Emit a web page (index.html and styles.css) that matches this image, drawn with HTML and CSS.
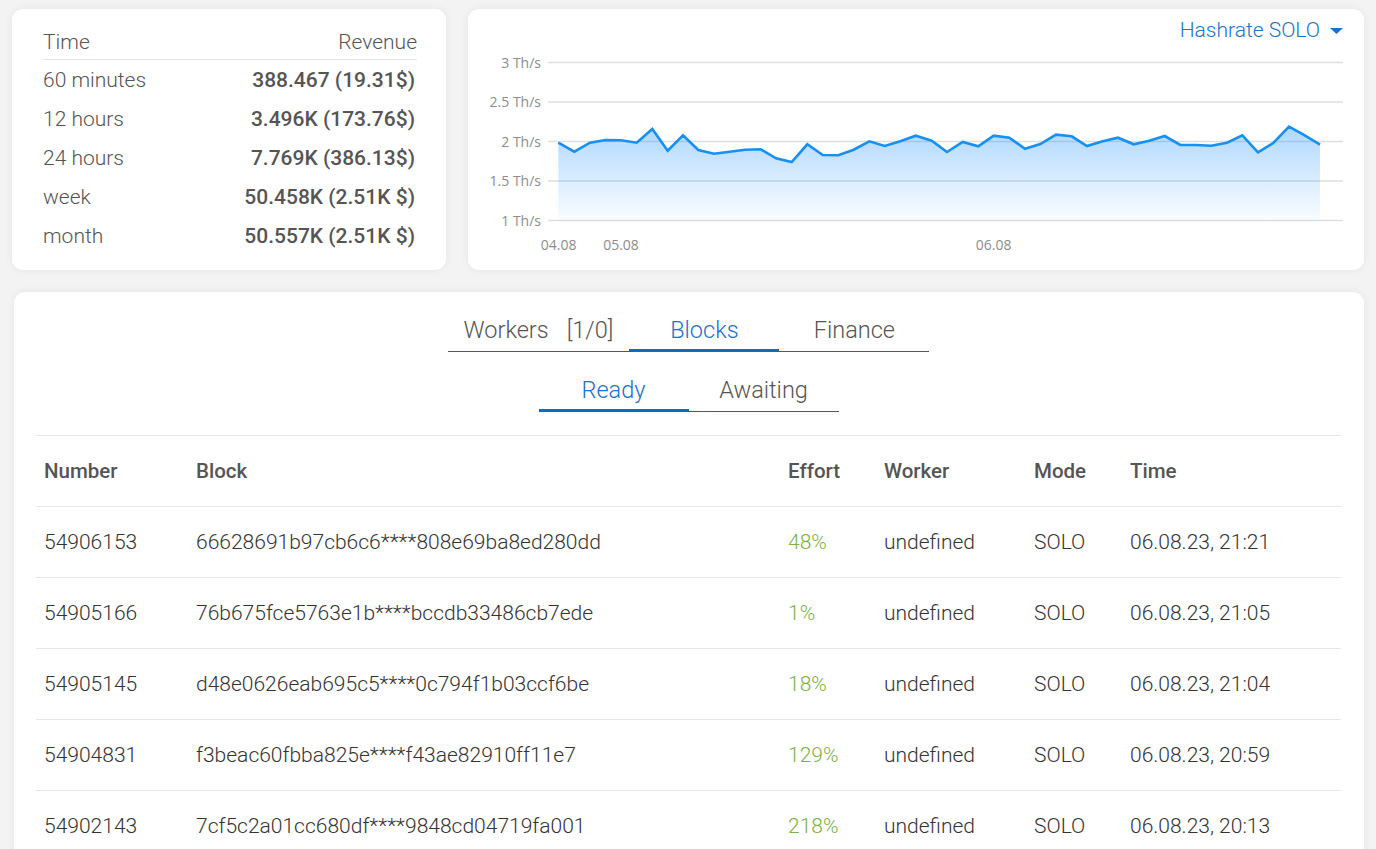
FILE: index.html
```html
<!DOCTYPE html>
<html lang="en">
<head>
<meta charset="utf-8">
<title>Pool dashboard</title>
<link rel="stylesheet" href="styles.css">
</head>
<body>
<div class="top-row">
  <section class="card revenue">
    <div class="rev-head"><span>Time</span><span>Revenue</span></div>
    <div class="rev-row"><span class="rev-label">60 minutes</span><span class="rev-value">388.467 (19.31$)</span></div>
    <div class="rev-row"><span class="rev-label">12 hours</span><span class="rev-value">3.496K (173.76$)</span></div>
    <div class="rev-row"><span class="rev-label">24 hours</span><span class="rev-value">7.769K (386.13$)</span></div>
    <div class="rev-row"><span class="rev-label">week</span><span class="rev-value">50.458K (2.51K $)</span></div>
    <div class="rev-row"><span class="rev-label">month</span><span class="rev-value">50.557K (2.51K $)</span></div>
  </section>
  <section class="card chart-card">
    <div class="chart-head">
      <span class="chart-select">Hashrate SOLO<svg class="caret" width="13" height="6" viewBox="0 0 13 6"><polygon points="0,0 13,0 6.5,6" fill="#1a73c8"/></svg></span>
    </div>
    <svg class="chart" width="896" height="210" viewBox="0 0 896 210">
      <defs>
        <linearGradient id="areaFill" x1="0" y1="0" x2="0" y2="1">
          <stop offset="0" stop-color="#1e90ff" stop-opacity="0.36"/>
          <stop offset="1" stop-color="#1e90ff" stop-opacity="0.02"/>
        </linearGradient>
      </defs>
      <g class="grid">
        <line x1="80" y1="12.5" x2="875" y2="12.5"/>
        <line x1="80" y1="52" x2="875" y2="52"/>
        <line x1="80" y1="91.5" x2="875" y2="91.5"/>
        <line x1="80" y1="131" x2="875" y2="131"/>
        <line x1="80" y1="170.5" x2="875" y2="170.5"/>
      </g>
      <g class="ylabels">
        <text x="73" y="17.5">3 Th/s</text>
        <text x="73" y="57">2.5 Th/s</text>
        <text x="73" y="96.5">2 Th/s</text>
        <text x="73" y="136">1.5 Th/s</text>
        <text x="73" y="175.5">1 Th/s</text>
      </g>
      <polygon class="area" points="90.3,170.5 90.3,92.7 106.3,101.7 122,92.7 137.7,90 153,90.3 168.7,92.7 184.3,79 199.7,100.7 215,85.3 230.3,100 246,103.7 261.7,101.7 277,99.7 292.7,99.3 308,108.3 323.7,112 339.3,94.3 354.7,105 370.3,105.3 385.7,99.7 401.3,91.3 416.7,96 432.3,91.3 447.7,85.7 463.7,90.7 479,102 494.7,92 510.3,96.3 525.7,85.7 541.3,87.7 557,98.7 572.3,94 588,84.7 603.7,86.3 619,96 634.7,91.3 650,87.7 665.7,94.3 681.3,90.7 696.7,86 712.3,95 728,95 743.3,95.7 759,92.7 774.3,85.3 790,102.3 805.3,93 821,76.7 836.7,85.3 852,94.7 852,170.5"/>
      <polyline class="line" points="90.3,92.7 106.3,101.7 122,92.7 137.7,90 153,90.3 168.7,92.7 184.3,79 199.7,100.7 215,85.3 230.3,100 246,103.7 261.7,101.7 277,99.7 292.7,99.3 308,108.3 323.7,112 339.3,94.3 354.7,105 370.3,105.3 385.7,99.7 401.3,91.3 416.7,96 432.3,91.3 447.7,85.7 463.7,90.7 479,102 494.7,92 510.3,96.3 525.7,85.7 541.3,87.7 557,98.7 572.3,94 588,84.7 603.7,86.3 619,96 634.7,91.3 650,87.7 665.7,94.3 681.3,90.7 696.7,86 712.3,95 728,95 743.3,95.7 759,92.7 774.3,85.3 790,102.3 805.3,93 821,76.7 836.7,85.3 852,94.7"/>
      <g class="xlabels">
        <text x="90.7" y="200">04.08</text>
        <text x="153" y="200">05.08</text>
        <text x="525.7" y="200">06.08</text>
      </g>
    </svg>
  </section>
</div>

<section class="card blocks-card">
  <div class="tabs">
    <div class="tab">Workers<span class="count">[1/0]</span></div>
    <div class="tab active">Blocks</div>
    <div class="tab">Finance</div>
  </div>
  <div class="tabs sub">
    <div class="tab active">Ready</div>
    <div class="tab">Awaiting</div>
  </div>
  <table class="blocks">
    <colgroup>
      <col class="c-num"><col class="c-block"><col class="c-effort"><col class="c-worker"><col class="c-mode"><col class="c-time">
    </colgroup>
    <thead>
      <tr><th>Number</th><th>Block</th><th>Effort</th><th>Worker</th><th>Mode</th><th>Time</th></tr>
    </thead>
    <tbody>
      <tr><td>54906153</td><td>66628691b97cb6c6****808e69ba8ed280dd</td><td class="effort">48%</td><td>undefined</td><td>SOLO</td><td>06.08.23, 21:21</td></tr>
      <tr><td>54905166</td><td>76b675fce5763e1b****bccdb33486cb7ede</td><td class="effort">1%</td><td>undefined</td><td>SOLO</td><td>06.08.23, 21:05</td></tr>
      <tr><td>54905145</td><td>d48e0626eab695c5****0c794f1b03ccf6be</td><td class="effort">18%</td><td>undefined</td><td>SOLO</td><td>06.08.23, 21:04</td></tr>
      <tr><td>54904831</td><td>f3beac60fbba825e****f43ae82910ff11e7</td><td class="effort">129%</td><td>undefined</td><td>SOLO</td><td>06.08.23, 20:59</td></tr>
      <tr><td>54902143</td><td>7cf5c2a01cc680df****9848cd04719fa001</td><td class="effort">218%</td><td>undefined</td><td>SOLO</td><td>06.08.23, 20:13</td></tr>
    </tbody>
  </table>
</section>
</body>
</html>
```

FILE: styles.css
```css
* { box-sizing: border-box; }

html, body {
  margin: 0;
  background: #f3f3f3;
}

body {
  padding: 9px 12px 0 12px;
  font-family: Roboto, "Liberation Sans", sans-serif;
  color: #555;
}

.card {
  background: #fff;
  border-radius: 11px;
  box-shadow: 0 0 10px rgba(0, 0, 0, 0.06);
}

.top-row {
  display: flex;
  gap: 22px;
}

/* Revenue card */
.revenue {
  flex: none;
  width: 434px;
  padding: 18px 29px 14px 31px;
  font-size: 21px;
}

.rev-head {
  display: flex;
  justify-content: space-between;
  height: 33px;
  line-height: 31px;
  margin-bottom: 1px;
  border-bottom: 1px solid #e3e3e3;
  font-weight: 300;
  color: #555;
}

.rev-row {
  display: flex;
  justify-content: space-between;
  line-height: 39px;
}

.rev-label {
  font-weight: 300;
  color: #555;
}

.rev-value {
  font-weight: 500;
  color: #555;
  padding-right: 2px;
}

/* Chart card */
.chart-card {
  flex: 1;
  padding: 0 0 10px 0;
  display: flex;
  flex-direction: column;
}

.chart-head {
  display: flex;
  justify-content: flex-end;
  padding: 9px 21px 8px 0;
  line-height: 24px;
  height: 41px;
}

.chart-select {
  display: inline-flex;
  align-items: center;
  font-size: 21px;
  font-weight: 300;
  color: #1a73c8;
}

.caret {
  margin-left: 10px;
  margin-top: 1px;
}

.chart {
  display: block;
}

.grid line {
  stroke: #dedede;
  stroke-width: 1.3;
}

.ylabels text {
  font-family: "Open Sans", sans-serif;
  font-size: 14px;
  fill: #8d8d8d;
  text-anchor: end;
}

.xlabels text {
  font-family: "Open Sans", sans-serif;
  font-size: 14px;
  fill: #8d8d8d;
  text-anchor: middle;
}

.area {
  fill: url(#areaFill);
}

.line {
  fill: none;
  stroke: #1690f5;
  stroke-width: 2.6;
  stroke-linejoin: miter;
}

/* Blocks card */
.blocks-card {
  margin: 22px 0 0 2px;
  padding: 25px 23px 30px 22px;
}

.tabs {
  display: flex;
  justify-content: center;
}

.tabs.sub {
  margin-top: 25px;
}

.tab {
  min-width: 150px;
  padding: 0 16px 8px;
  text-align: center;
  font-size: 23.5px;
  font-weight: 300;
  line-height: 26px;
  color: #555;
  border-bottom: 1px solid #555;
}

.tab.active {
  color: #1a73c8;
  border-bottom: 3px solid #0a6ebd;
  padding-bottom: 6px;
}

.count {
  margin-left: 18px;
}

.blocks {
  width: 100%;
  margin-top: 23px;
  border-collapse: collapse;
  table-layout: fixed;
  font-size: 21px;
}

.c-num { width: 152px; }
.c-block { width: 592px; }
.c-effort { width: 96px; }
.c-worker { width: 150px; }
.c-mode { width: 96px; }
.c-time { width: 219px; }

.blocks th,
.blocks td {
  text-align: left;
  padding: 0 0 0 8px;
  height: 71px;
  border-top: 1px solid #e6e6e6;
  border-bottom: 1px solid #e6e6e6;
  white-space: nowrap;
}

.blocks th {
  font-size: 20.5px;
  font-weight: 500;
  color: #555;
}

.blocks td {
  font-weight: 300;
  color: #333;
}

.blocks td.effort {
  color: #7cb342;
}
```
